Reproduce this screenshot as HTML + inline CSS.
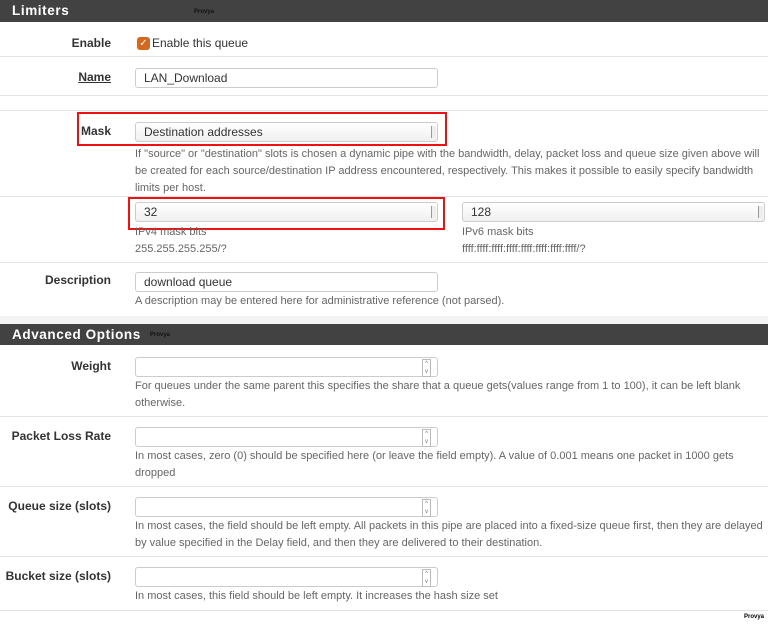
<!DOCTYPE html>
<html><head><style>
body{margin:0;width:768px;height:626px;background:#fff;font-family:"Liberation Sans",sans-serif;font-size:12px;color:#333;position:relative;overflow:hidden}
.a{position:absolute}
.hdr{background:#424242;color:#fff;font-size:13.5px;font-weight:bold;letter-spacing:.6px;height:22px;line-height:22px;padding-left:12px;left:0;width:756px}
.hl{height:1px;background:#e3e3e3;left:0;width:768px}
.lb{font-weight:bold;text-align:right;width:111px;left:0;font-size:12px}
.in{border:1px solid #ccc;border-radius:3px;height:20px;box-sizing:border-box;background:#fff;font-size:12px;line-height:18px;padding-left:8px;color:#333}
.sel{background:linear-gradient(#fff,#f0f0f0)}
.arr{position:absolute;right:1px;top:3px;width:4px;height:12px;border-left:1px solid #999;background:#eee}
.hp{color:#666;font-size:11px;line-height:17px;left:135px;width:630px}
.spin{position:absolute;right:6px;top:1px;font-size:6px;line-height:8px;color:#777;border:1px solid #bbb;width:7px;text-align:center}
.red{border:2px solid #e11;box-sizing:border-box}
.wm{color:#000;font-size:6px;font-weight:bold}
</style></head><body>
<div class="a hdr" style="top:0">Limiters</div>
<div class="a wm" style="left:194px;top:9px;color:#111">Provya</div>
<div class="a lb" style="top:36px">Enable</div>
<div class="a" style="left:137px;top:37px;width:13px;height:13px;background:#d2691e;border-radius:3px;color:#fff;font-size:10px;line-height:13px;text-align:center">✓</div>
<div class="a" style="left:152px;top:36px">Enable this queue</div>
<div class="a hl" style="top:56px"></div>
<div class="a lb" style="top:70px;text-decoration:underline">Name</div>
<div class="a in" style="left:135px;top:68px;width:303px">LAN_Download</div>
<div class="a hl" style="top:95px"></div>
<div class="a hl" style="top:110px"></div>
<div class="a red" style="left:77px;top:112px;width:370px;height:34px"></div>
<div class="a lb" style="top:124px">Mask</div>
<div class="a in sel" style="left:135px;top:122px;width:303px">Destination addresses<span class="arr"></span></div>
<div class="a hp" style="top:146px">If "source" or "destination" slots is chosen a dynamic pipe with the bandwidth, delay, packet loss and queue size given above will be created for each source/destination IP address encountered, respectively. This makes it possible to easily specify bandwidth limits per host.</div>
<div class="a hl" style="top:196px"></div>
<div class="a red" style="left:128px;top:197px;width:317px;height:33px"></div>
<div class="a in sel" style="left:135px;top:202px;width:303px">32<span class="arr"></span></div>
<div class="a in sel" style="left:462px;top:202px;width:303px">128<span class="arr"></span></div>
<div class="a hp" style="top:224px;width:300px">IPv4 mask bits<br>255.255.255.255/?</div>
<div class="a hp" style="left:462px;top:224px;width:300px">IPv6 mask bits<br>ffff:ffff:ffff:ffff:ffff:ffff:ffff:ffff/?</div>
<div class="a hl" style="top:262px"></div>
<div class="a lb" style="top:273px">Description</div>
<div class="a in" style="left:135px;top:272px;width:303px">download queue</div>
<div class="a hp" style="top:293px">A description may be entered here for administrative reference (not parsed).</div>
<div class="a" style="left:0;top:316px;width:768px;height:8px;background:#f3f3f3"></div>
<div class="a hdr" style="top:324px;height:21px;line-height:21px">Advanced Options</div>
<div class="a wm" style="left:150px;top:332px;color:#111">Provya</div>
<div class="a lb" style="top:359px">Weight</div>
<div class="a in" style="left:135px;top:357px;width:303px"><span class="spin">^<br>v</span></div>
<div class="a hp" style="top:378px">For queues under the same parent this specifies the share that a queue gets(values range from 1 to 100), it can be left blank otherwise.</div>
<div class="a hl" style="top:416px"></div>
<div class="a lb" style="top:429px">Packet Loss Rate</div>
<div class="a in" style="left:135px;top:427px;width:303px"><span class="spin">^<br>v</span></div>
<div class="a hp" style="top:448px">In most cases, zero (0) should be specified here (or leave the field empty). A value of 0.001 means one packet in 1000 gets dropped</div>
<div class="a hl" style="top:486px"></div>
<div class="a lb" style="top:499px">Queue size (slots)</div>
<div class="a in" style="left:135px;top:497px;width:303px"><span class="spin">^<br>v</span></div>
<div class="a hp" style="top:518px">In most cases, the field should be left empty. All packets in this pipe are placed into a fixed-size queue first, then they are delayed by value specified in the Delay field, and then they are delivered to their destination.</div>
<div class="a hl" style="top:556px"></div>
<div class="a lb" style="top:569px">Bucket size (slots)</div>
<div class="a in" style="left:135px;top:567px;width:303px"><span class="spin">^<br>v</span></div>
<div class="a hp" style="top:588px">In most cases, this field should be left empty. It increases the hash size set</div>
<div class="a hl" style="top:610px"></div>
<div class="a wm" style="left:744px;top:614px">Provya</div>
</body></html>
